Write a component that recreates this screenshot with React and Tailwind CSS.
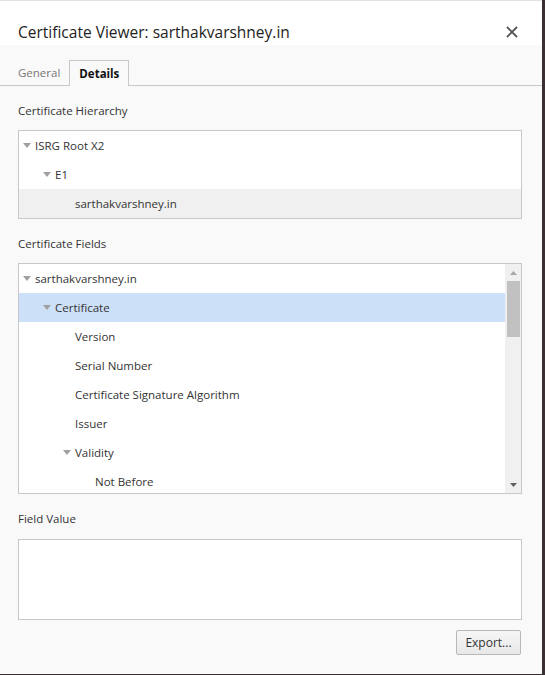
import React from 'react'

const font = { fontFamily: '"Open Sans", "Noto Sans", sans-serif' }

function Arrow() {
  return (
    <svg width="8" height="5" viewBox="0 0 8 5" className="shrink-0">
      <path d="M0 0 H8 L4 5 Z" fill="#a0a0a0" />
    </svg>
  )
}

function Row({ level, label, expanded, className = '' }) {
  const pad = ['pl-[4px]', 'pl-[24px]', 'pl-[44px]', 'pl-[64px]'][level]
  return (
    <div className={`h-[29px] flex items-center ${pad} ${className}`}>
      <span className="w-[12px] flex items-center">{expanded && <Arrow />}</span>
      <span>{label}</span>
    </div>
  )
}

const fields = [
  { level: 0, label: 'sarthakvarshney.in', expanded: true },
  { level: 1, label: 'Certificate', expanded: true, selected: true },
  { level: 2, label: 'Version' },
  { level: 2, label: 'Serial Number' },
  { level: 2, label: 'Certificate Signature Algorithm' },
  { level: 2, label: 'Issuer' },
  { level: 2, label: 'Validity', expanded: true },
  { level: 3, label: 'Not Before' },
]

export default function App() {
  return (
    <div className="w-[545px] h-[675px] bg-[#3a3033] flex" style={font}>
      <div className="w-[542px] h-[674px] bg-[#f9f9f9] border-t border-[#e2e2e2] flex flex-col text-[11.5px] text-[#333]">
        <div className="bg-white h-[44px] flex items-end justify-between pl-[18px] pr-[24px] pb-[2px]">
          <h1 className="text-[15.5px] text-[#222] leading-none mb-[3px]">Certificate Viewer: sarthakvarshney.in</h1>
          <svg width="12" height="12" viewBox="0 0 12 12" className="mb-[5px]">
            <path d="M1 1 L11 11 M11 1 L1 11" stroke="#555" strokeWidth="1.8" />
          </svg>
        </div>

        <div className="mt-[15px] flex items-end border-b border-[#c8c8c8] pl-[18px] h-[26px]">
          <div className="h-[25px] flex items-center text-[#777]">General</div>
          <div className="ml-[9px] px-[9px] h-[26px] flex items-center font-bold text-[#111] border border-b-0 border-[#c8c8c8] bg-[#f9f9f9] -mb-px">Details</div>
        </div>

        <div className="px-[18px] pr-[20px]">
          <div className="mt-[16px] h-[17px] flex items-center">Certificate Hierarchy</div>
          <div className="mt-[11px] bg-white border border-[#c8c8c8]">
            <Row level={0} label="ISRG Root X2" expanded />
            <Row level={1} label="E1" expanded />
            <Row level={2} label="sarthakvarshney.in" className="bg-[#f0f0f0]" />
          </div>

          <div className="mt-[16px] h-[17px] flex items-center">Certificate Fields</div>
          <div className="mt-[11px] bg-white border border-[#c8c8c8] h-[231px] flex">
            <div className="flex-1 overflow-hidden">
              {fields.map((f) => (
                <Row key={f.label} {...f} className={f.selected ? 'bg-[#cce0f8]' : ''} />
              ))}
            </div>
            <div className="w-[16px] bg-[#f0f0f0] flex flex-col items-center">
              <svg width="7" height="4" viewBox="0 0 7 4" className="mt-[7px]">
                <path d="M0 4 H7 L3.5 0 Z" fill="#a8a8a8" />
              </svg>
              <div className="w-[13px] h-[56px] bg-[#c1c1c1] mt-[6px]" />
              <div className="flex-1" />
              <svg width="7" height="4" viewBox="0 0 7 4" className="mb-[6px]">
                <path d="M0 0 H7 L3.5 4 Z" fill="#606060" />
              </svg>
            </div>
          </div>

          <div className="mt-[16px] h-[17px] flex items-center">Field Value</div>
          <div className="mt-[12px] bg-white border border-[#c8c8c8] h-[81px]" />

          <div className="flex justify-end mt-[10px]">
            <button className="w-[65px] h-[25px] border border-[#b8b8b8] rounded-[2px] bg-gradient-to-b from-[#f6f6f6] to-[#e8e8e8] text-[#333] text-[12px] mr-[1px]">Export...</button>
          </div>
        </div>
      </div>
    </div>
  )
}
